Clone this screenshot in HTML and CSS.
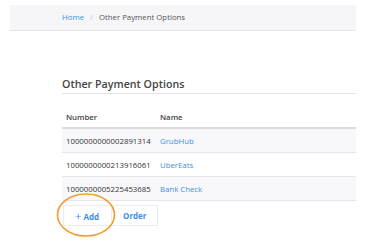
FILE: index.html
```html
<!DOCTYPE html>
<html>
	<head>
		<meta charset="UTF-8">
		<title>Other Payment Options</title>
		<link rel="stylesheet" href="styles.css">
	</head>
	<body>
		<div class="page">
			<div class="crumbs">
				<a href="javascript:(0);">Home</a>
				<span class="sep">/</span>
				<span class="cur">Other Payment Options</span>
			</div>
			<div class="content">
				<h2 class="title">Other Payment Options</h2>
				<table class="datalist">
					<thead>
						<tr>
							<th class="num">Number</th>
							<th>Name</th>
						</tr>
					</thead>
					<tbody>
						<tr class="lot">
							<td class="num">1000000000002891314</td>
							<td><a href="javascript:(0);">GrubHub</a></td>
						</tr>
						<tr class="lit">
							<td class="num">1000000000213916061</td>
							<td><a href="javascript:(0);">UberEats</a></td>
						</tr>
						<tr class="lot">
							<td class="num">1000000005225453685</td>
							<td><a href="javascript:(0);">Bank Check</a></td>
						</tr>
					</tbody>
				</table>
				<div class="btns">
					<a class="btn add" href="javascript:(0);"><span class="plus">+</span> Add</a>
					<a class="btn" href="javascript:(0);">Order</a>
					<svg class="ring" width="62" height="46" viewBox="0 0 62 46">
						<ellipse cx="30" cy="22" rx="28.5" ry="21" fill="none" stroke="#f39a2c" stroke-width="1.6"/>
					</svg>
				</div>
			</div>
		</div>
	</body>
</html>
```

FILE: styles.css
```css
*{margin:0;padding:0;}
html,body{background:#fff;}
body{font-family:"Open Sans","Liberation Sans",Arial,sans-serif;color:#333;min-height:252px;}
a{text-decoration:none;color:#3d8fe3;}
.page{padding:5px 10px 30px;}
.crumbs{height:25px;line-height:25px;background:#f6f6f9;border-bottom:1px solid #e4e4ea;padding-left:52px;font-size:7.8px;}
.crumbs .sep{color:#c8c8cc;margin:0 4px;}
.crumbs .cur{color:#555;}
.content{margin:45px 0 0 52px;}
.title{font-size:10.7px;font-weight:600;color:#444;line-height:16px;padding-bottom:1px;border-bottom:1px solid #e2e2e6;}
.datalist{width:100%;border-collapse:collapse;margin-top:12px;font-size:7.8px;}
.datalist th{text-align:left;font-weight:600;color:#444;height:21px;padding:0 4px;border-bottom:2px solid #dcdce0;vertical-align:middle;}
.datalist td{height:23px;padding:0 4px;border-bottom:1px solid #e6e6ea;vertical-align:middle;}
.datalist .num{width:86px;}
.lot{background:#f8f8fb;}
.lit{background:#fff;}
.btns{position:relative;display:flex;margin:4px 0 0 1px;}
.btn{display:block;height:19px;line-height:19px;padding:0 11px;border:1px solid #ececf0;font-size:8px;font-weight:bold;color:#3d8fe3;background:#fff;}
.btn.add{padding:0 12px 0 11px;}
.btn+.btn{border-left:none;}
.plus{font-size:11px;font-weight:normal;}
.ring{position:absolute;left:-7px;top:-12px;}
```
